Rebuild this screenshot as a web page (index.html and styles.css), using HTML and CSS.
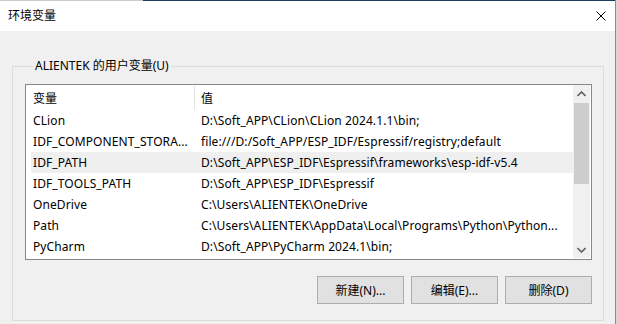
FILE: index.html
```html
<!DOCTYPE html>
<html lang="zh-CN">
<head>
  <meta charset="UTF-8">
  <title>环境变量</title>
  <link rel="stylesheet" href="styles.css">
</head>
<body>
  <div class="window">
    <div class="topline">
      <div class="topline-left"></div>
      <div class="topline-right"></div>
    </div>
    <div class="titlebar">
      <span class="title">环境变量</span>
      <svg class="close" width="10" height="10" viewBox="0 0 10 10">
        <path d="M0.5 0.5 L9.5 9.5 M9.5 0.5 L0.5 9.5" stroke="#000" stroke-width="1" fill="none"/>
      </svg>
    </div>

    <fieldset class="group">
      <legend>ALIENTEK 的用户变量(U)</legend>

      <div class="listbox">
        <div class="list">
          <div class="row header">
            <div class="cell name">变量</div>
            <div class="cell value">值</div>
          </div>
          <div class="row">
            <div class="cell name">CLion</div>
            <div class="cell value">D:\Soft_APP\CLion\CLion 2024.1.1\bin;</div>
          </div>
          <div class="row">
            <div class="cell name">IDF_COMPONENT_STORA...</div>
            <div class="cell value">file:///D:/Soft_APP/ESP_IDF/Espressif/registry;default</div>
          </div>
          <div class="row selected">
            <div class="cell name">IDF_PATH</div>
            <div class="cell value">D:\Soft_APP\ESP_IDF\Espressif\frameworks\esp-idf-v5.4</div>
          </div>
          <div class="row">
            <div class="cell name">IDF_TOOLS_PATH</div>
            <div class="cell value">D:\Soft_APP\ESP_IDF\Espressif</div>
          </div>
          <div class="row">
            <div class="cell name">OneDrive</div>
            <div class="cell value">C:\Users\ALIENTEK\OneDrive</div>
          </div>
          <div class="row">
            <div class="cell name">Path</div>
            <div class="cell value">C:\Users\ALIENTEK\AppData\Local\Programs\Python\Python...</div>
          </div>
          <div class="row">
            <div class="cell name">PyCharm</div>
            <div class="cell value">D:\Soft_APP\PyCharm 2024.1\bin;</div>
          </div>
        </div>

        <div class="scrollbar">
          <div class="arrow">
            <svg width="9" height="6" viewBox="0 0 9 6">
              <path d="M0.5 5 L4.5 1 L8.5 5" stroke="#606060" stroke-width="1.6" fill="none"/>
            </svg>
          </div>
          <div class="track">
            <div class="thumb"></div>
          </div>
          <div class="arrow">
            <svg width="9" height="6" viewBox="0 0 9 6">
              <path d="M0.5 1 L4.5 5 L8.5 1" stroke="#606060" stroke-width="1.6" fill="none"/>
            </svg>
          </div>
        </div>
      </div>

      <div class="buttons">
        <button class="btn">新建(N)...</button>
        <button class="btn">编辑(E)...</button>
        <button class="btn">删除(D)</button>
      </div>
    </fieldset>
  </div>
</body>
</html>
```

FILE: styles.css
```css
body {
  margin: 0;
  background-color: #d8d8d8;
  font-family: "Noto Sans", "Noto Sans CJK SC", sans-serif;
  font-size: 12px;
  color: #000;
}
.window {
  width: 616px;
  height: 324px;
  box-sizing: border-box;
  border-right: 1px solid #8c8c8c;
  background-color: #f0f0f0;
  overflow: hidden;
}
.topline {
  display: flex;
  height: 1px;
}
.topline-left {
  width: 143px;
  background-color: #c9c9c9;
}
.topline-right {
  flex: 1;
  background-color: #1f3a5a;
}
.titlebar {
  height: 30px;
  background-color: #fff;
  display: flex;
  align-items: center;
  justify-content: space-between;
  padding: 0 9px 0 8px;
}
.title {
  line-height: 16px;
}
.close {
  display: block;
}
.group {
  margin: 27px 0 0 12px;
  width: 592px;
  box-sizing: border-box;
  border: 1px solid #dcdcdc;
  padding: 0 11px 16px 12px;
  height: 263px;
}
.group legend {
  margin-left: 8px;
  padding: 0 2px;
  line-height: 16px;
}
.listbox {
  margin-top: 10px;
  height: 176px;
  box-sizing: border-box;
  border: 1px solid #828790;
  background-color: #fff;
  padding: 0 1px 1px 1px;
  display: flex;
}
.list {
  flex: 1;
  overflow: hidden;
}
.row {
  display: grid;
  grid-template-columns: 164px 1fr;
  height: 21px;
  align-items: center;
  margin-left: 4px;
  white-space: nowrap;
  letter-spacing: 0.1px;
}
.row.header {
  height: 25px;
  align-items: stretch;
}
.row.header .cell {
  display: flex;
  align-items: center;
  margin-top: 1px;
}
.row.header .name {
  border-right: 1px solid #e5e5e5;
}
.row.selected {
  background-color: #efefef;
}
.cell {
  overflow: hidden;
}
.name {
  padding-left: 2px;
}
.value {
  padding-left: 6px;
}
.scrollbar {
  width: 17px;
  background-color: #f0f0f0;
  display: flex;
  flex-direction: column;
}
.arrow {
  height: 17px;
  display: flex;
  align-items: center;
  justify-content: center;
}
.arrow svg {
  display: block;
}
.track {
  flex: 1;
  padding: 1px;
}
.thumb {
  height: 81px;
  background-color: #cdcdcd;
}
.buttons {
  display: flex;
  justify-content: flex-end;
  gap: 7px;
  margin-top: 16px;
}
.btn {
  width: 87px;
  height: 28px;
  box-sizing: border-box;
  border: 1px solid #adadad;
  background-color: #e1e1e1;
  font-family: inherit;
  font-size: 12px;
  color: #000;
  padding: 0;
}
```
